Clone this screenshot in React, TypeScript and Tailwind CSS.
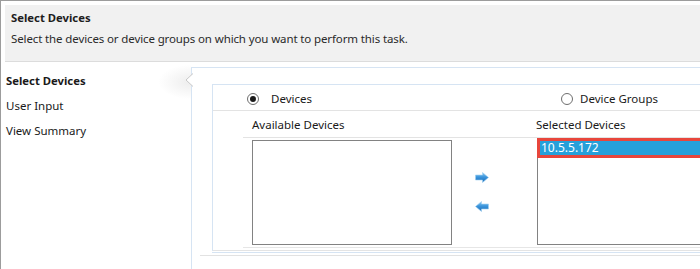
import React from "react";

function Arrow({ dir }: { dir: "right" | "left" }) {
  const id = dir === "right" ? "gr" : "gl";
  return (
    <svg width="14" height="11" viewBox="0 0 14 11" style={{ transform: dir === "left" ? "scaleX(-1)" : undefined }}>
      <defs>
        <linearGradient id={id} x1="0" y1="0" x2="0" y2="1">
          <stop offset="0" stopColor="#8ccaf2" />
          <stop offset="0.45" stopColor="#3b95dc" />
          <stop offset="1" stopColor="#1a6cb8" />
        </linearGradient>
      </defs>
      <path d="M0.5 3 H7.5 V0.5 L13.5 5.5 L7.5 10.5 V8 H0.5 Z" fill={`url(#${id})`} stroke="#9fd0f2" strokeWidth="0.6" />
    </svg>
  );
}

function Radio({ checked }: { checked?: boolean }) {
  return (
    <span className="w-[12px] h-[12px] rounded-full border border-[#6e6e6e] bg-white flex items-center justify-center shrink-0">
      {checked && <span className="w-[6px] h-[6px] rounded-full bg-[#1a1a1a]" />}
    </span>
  );
}

export default function App() {
  return (
    <div className="w-[700px] h-[269px] overflow-hidden bg-white border-l border-t border-[#9c9c9c] font-['Noto_Sans',sans-serif] text-[11.5px] text-[#1a1a1a] relative">
      {/* Header */}
      <div className="ml-[4px] mt-[4px] h-[57px] bg-[#f1f1f1] border-b border-[#dcdcdc] pl-[6px] pt-[3px]">
        <div className="h-[20px] leading-[20px] font-bold text-[11.3px] text-[#1e1e1e]">Select Devices</div>
        <div className="h-[20px] leading-[20px] mt-[1px] text-[#2a2a2a] tracking-[-0.12px]">
          Select the devices or device groups on which you want to perform this task.
        </div>
      </div>

      {/* Body */}
      <div className="flex">
        <div className="w-[190px] shrink-0 pt-[6px] pl-[5px] relative">
          <div className="absolute left-[158px] top-[3px] w-[32px] h-[34px] bg-[radial-gradient(ellipse_at_right,#ededed_0%,#f7f7f7_40%,rgba(255,255,255,0)_72%)]" />
          <div className="relative leading-[25px] font-bold text-[11.3px]">Select Devices</div>
          <div className="relative leading-[25px]">User Input</div>
          <div className="relative leading-[25px]">View Summary</div>
        </div>

        <div className="flex-1 min-w-0 mt-[5px] h-[210px] border-l border-t border-[#d6e4f3] pl-[20px] pt-[16px] relative">
          <svg className="absolute left-[-7px] top-[5px]" width="8" height="14" viewBox="0 0 8 14">
            <path d="M8 0.5 L1 7 L8 13.5 Z" fill="#ffffff" />
            <path d="M8 0.5 L1 7 L8 13.5" fill="none" stroke="#c8c8c8" strokeWidth="1" />
          </svg>

          <div className="w-[520px] border-l border-t border-[#d6e4f3]">
            <div className="border-b border-[#e4e4e4] pb-[2px]">
              {/* Radio row */}
              <div className="h-[26px] border-b border-[#e3e3e3] flex items-center pl-[34px] pt-[2px]">
                <div className="w-[314px] flex items-center">
                  <Radio checked />
                  <span className="ml-[12px]">Devices</span>
                </div>
                <div className="flex items-center">
                  <Radio />
                  <span className="ml-[7px]">Device Groups</span>
                </div>
              </div>

              <div className="ml-[30px]">
                {/* Headers */}
                <div className="h-[27px] border-b border-[#e3e3e3] flex items-center pt-[2px]">
                  <div className="w-[293px] pl-[9px]">Available Devices</div>
                  <div>Selected Devices</div>
                </div>

                {/* Lists */}
                <div className="pt-[2px] pb-[2px] border-b border-[#e6e6e6] flex">
                  <div className="ml-[9px] w-[200px] h-[105px] border border-[#828282] bg-white shrink-0" />
                  <div className="w-[85px] shrink-0 pl-[23px] pt-[32px] flex flex-col gap-[18px]">
                    <Arrow dir="right" />
                    <Arrow dir="left" />
                  </div>
                  <div className="w-[200px] shrink-0 h-[105px] border border-r-0 border-[#828282] bg-white relative">
                    <div className="ml-[2px] h-[14px] leading-[14px] bg-[#26a0da] text-white text-[12px] pl-[1px]">10.5.5.172</div>
                    <div className="absolute left-[-1px] top-[-3px] w-[166px] h-[20px] border-[3px] border-[#e8463c]" />
                  </div>
                </div>
              </div>
            </div>
          </div>
          <div className="w-[520px] mt-[1px] border-t border-[#d6e4f3]" />
          <div className="w-[540px] -ml-[12px] mt-[2px] border-t border-[#e2e2e2]" />
        </div>
      </div>
    </div>
  );
}
